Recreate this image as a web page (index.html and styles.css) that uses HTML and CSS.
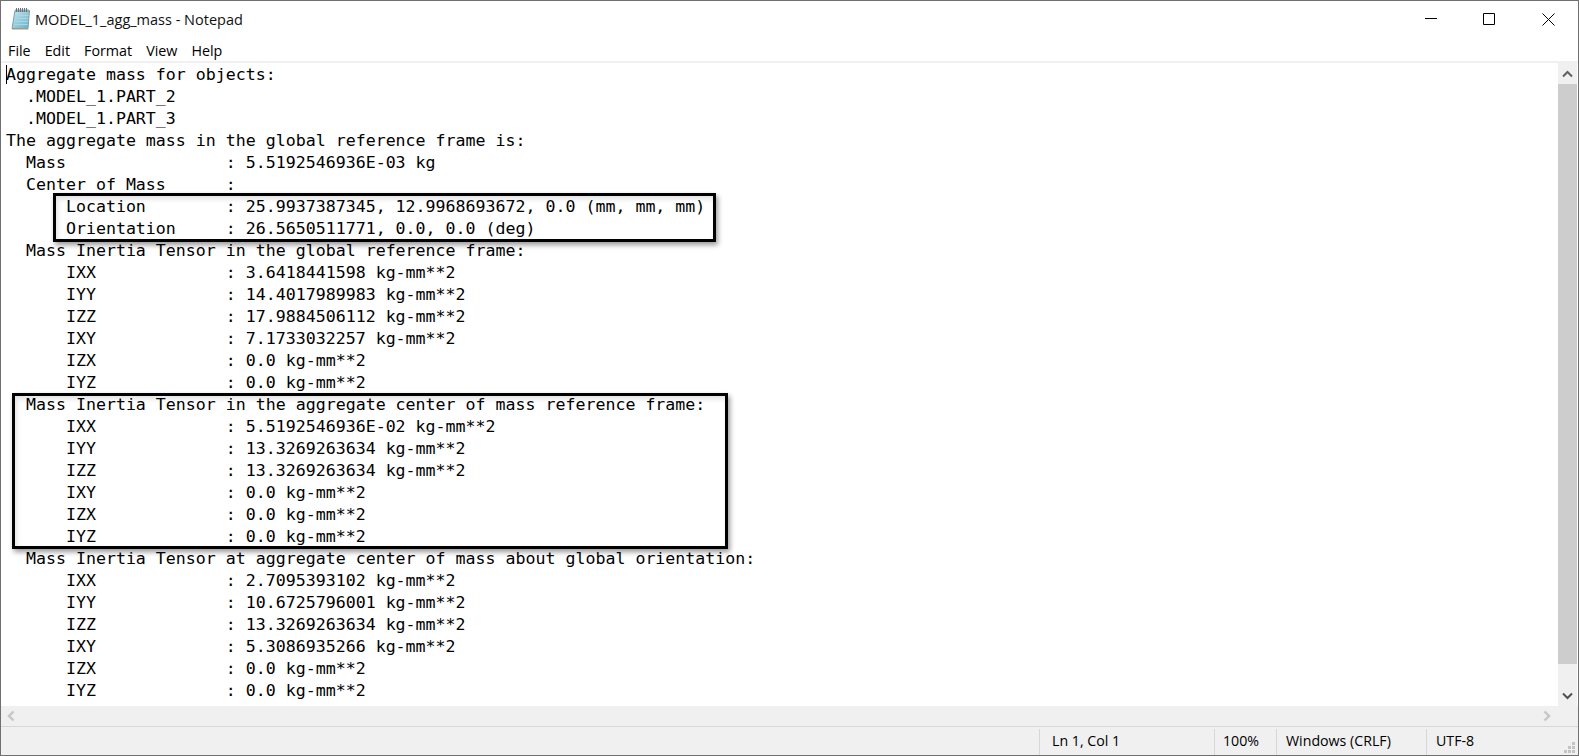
FILE: index.html
```html
<!DOCTYPE html>
<html lang="en">
<head>
<meta charset="utf-8">
<title>MODEL_1_agg_mass - Notepad</title>
<link rel="stylesheet" href="styles.css">
</head>
<body>
<div class="window">
  <header class="titlebar">
    <svg class="app-icon" width="19" height="22" viewBox="0 0 19 22">
      <defs><linearGradient id="pad" x1="0" y1="0" x2="1" y2="1"><stop offset="0" stop-color="#c4e8f2"/><stop offset="1" stop-color="#6aaec4"/></linearGradient></defs>
      <path d="M4 2.5H18.5L17 20.5H1Z" fill="url(#pad)" stroke="#7aa0ae"/>
      <path d="M4 7.5H17.5M3.6 10.5H17.2M3.3 13.5H17M3 16.5H16.8" stroke="#a8d8e6"/>
      <path d="M4 1.5h14v2.5H4z" fill="#98a8ae"/>
      <path d="M5.5 0v4M7.5 0v4M9.5 0v4M11.5 0v4M13.5 0v4M15.5 0v4" stroke="#67767c"/>
      <path d="M1 20.5H17.5V21.5H1Z" fill="#b09a74"/>
    </svg>
    <span class="title">MODEL_1_agg_mass - Notepad</span>
    <div class="controls">
      <svg class="ctl" width="13" height="13" viewBox="0 0 13 13"><path d="M1 5.5H13" stroke="#000"/></svg>
      <svg class="ctl" width="13" height="13" viewBox="0 0 13 13"><path d="M.5.5H11.5V11.5H.5Z" fill="none" stroke="#000"/></svg>
      <svg class="ctl" width="13" height="13" viewBox="0 0 13 13"><path d="M.5.5L12.5 12.5M12.5.5L.5 12.5" stroke="#000"/></svg>
    </div>
  </header>
  <nav class="menubar">
    <span>File</span><span>Edit</span><span>Format</span><span>View</span><span>Help</span>
  </nav>
  <div class="client">
    <div class="editor-row">
      <main class="editor">
        <pre class="text">Aggregate mass for objects:
  .MODEL_1.PART_2
  .MODEL_1.PART_3
The aggregate mass in the global reference frame is:
  Mass                : 5.5192546936E-03 kg
  Center of Mass      :
      Location        : 25.9937387345, 12.9968693672, 0.0 (mm, mm, mm)
      Orientation     : 26.5650511771, 0.0, 0.0 (deg)
  Mass Inertia Tensor in the global reference frame:
      IXX             : 3.6418441598 kg-mm**2
      IYY             : 14.4017989983 kg-mm**2
      IZZ             : 17.9884506112 kg-mm**2
      IXY             : 7.1733032257 kg-mm**2
      IZX             : 0.0 kg-mm**2
      IYZ             : 0.0 kg-mm**2
  Mass Inertia Tensor in the aggregate center of mass reference frame:
      IXX             : 5.5192546936E-02 kg-mm**2
      IYY             : 13.3269263634 kg-mm**2
      IZZ             : 13.3269263634 kg-mm**2
      IXY             : 0.0 kg-mm**2
      IZX             : 0.0 kg-mm**2
      IYZ             : 0.0 kg-mm**2
  Mass Inertia Tensor at aggregate center of mass about global orientation:
      IXX             : 2.7095393102 kg-mm**2
      IYY             : 10.6725796001 kg-mm**2
      IZZ             : 13.3269263634 kg-mm**2
      IXY             : 5.3086935266 kg-mm**2
      IZX             : 0.0 kg-mm**2
      IYZ             : 0.0 kg-mm**2</pre>
        <div class="caret"></div>
        <div class="callout callout-a"></div>
        <div class="callout callout-b"></div>
      </main>
      <aside class="vscroll">
        <svg class="arrow" width="19" height="21" viewBox="0 0 19 21"><path d="M5 13.5L9.5 9L14 13.5" fill="none" stroke="#606060" stroke-width="2"/></svg>
        <div class="vtrack"><div class="vthumb"></div></div>
        <svg class="arrow" width="19" height="21" viewBox="0 0 19 21"><path d="M5 8.5L9.5 13L14 8.5" fill="none" stroke="#505050" stroke-width="2"/></svg>
      </aside>
    </div>
    <div class="hscroll">
      <svg class="arrow" width="20" height="20" viewBox="0 0 20 20"><path d="M12.5 5.5L8 10L12.5 14.5" fill="none" stroke="#c6c6c6" stroke-width="2.4"/></svg>
      <svg class="arrow" width="20" height="20" viewBox="0 0 20 20"><path d="M7.5 5.5L12 10L7.5 14.5" fill="none" stroke="#c6c6c6" stroke-width="2.4"/></svg>
    </div>
    <footer class="statusbar">
      <div class="cell cell-pos">Ln 1, Col 1</div>
      <div class="cell cell-zoom">100%</div>
      <div class="cell cell-eol">Windows (CRLF)</div>
      <div class="cell cell-enc">UTF-8</div>
      <svg class="grip" width="12" height="12" viewBox="0 0 12 12"><path d="M8 0h3v3H8zM4 4h3v3H4zM8 4h3v3H8zM0 8h3v3H0zM4 8h3v3H4zM8 8h3v3H8z" fill="#c4c4c4"/></svg>
    </footer>
  </div>
</div>
</body>
</html>
```
FILE: styles.css
```css
* { box-sizing: border-box; }
html, body { margin: 0; height: 100%; background: #fff; overflow: hidden; }
.window {
  width: 1579px; height: 756px;
  display: flex; flex-direction: column;
  border: 1px solid #707070;
  background: #fff;
  font-family: "Open Sans", "Liberation Sans", sans-serif;
  color: #000;
}
.titlebar { height: 38px; flex: none; display: flex; align-items: center; padding-left: 10px; }
.app-icon { margin: 0 5px 2px 0; flex: none; }
.title { font-size: 14.5px; color: #111; white-space: nowrap; margin-bottom: 2px; }
.controls { margin-left: auto; display: flex; gap: 46px; padding-right: 23px; margin-top: -1px; }
.menubar { height: 22px; flex: none; display: flex; gap: 14px; padding: 1px 0 0 7px; font-size: 14.3px; line-height: 22px; }
.client { flex: 1; min-height: 0; display: flex; flex-direction: column; border-top: 2px solid #f0f0f0; }
.editor-row { flex: 1; min-height: 0; display: flex; }
.editor { position: relative; flex: 1; min-width: 0; background: #fff; overflow: hidden; }
.text {
  margin: 0; padding: 1px 0 0 5px;
  font-family: "DejaVu Sans Mono", "Liberation Mono", monospace;
  font-size: 16.6px; line-height: 22px; color: #000;
}
.caret { position: absolute; left: 5px; top: 2px; width: 1px; height: 19px; background: #000; }
.callout { position: absolute; border: 3px solid #000; box-shadow: 2px 3px 5px rgba(0,0,0,.4), inset 2px 3px 5px rgba(0,0,0,.12); }
.callout-a { left: 52px; top: 130px; width: 663px; height: 49px; }
.callout-b { left: 11px; top: 330px; width: 716px; height: 156px; }
.vscroll { width: 19px; flex: none; background: #f0f0f0; display: flex; flex-direction: column; margin-right: 1px; }
.arrow { flex: none; display: block; }
.vtrack { flex: 1; min-height: 0; }
.vthumb { height: 580px; background: #cdcdcd; }
.hscroll { height: 20px; flex: none; background: #f0f0f0; display: flex; justify-content: space-between; padding-right: 21px; }
.statusbar {
  height: 29px; flex: none; display: flex; background: #f0f0f0;
  border-top: 1px solid #d7d7d7; padding-top: 2px; padding-left: 1038px;
  font-size: 14.2px; line-height: 24px; position: relative;
}
.cell { border-left: 1px solid #d7d7d7; white-space: nowrap; height: 26px; flex: none; }
.cell-pos { width: 175px; padding-left: 12px; }
.cell-zoom { width: 62px; padding-left: 8px; }
.cell-eol { width: 150px; padding-left: 9px; }
.cell-enc { width: 120px; padding-left: 9px; }
.grip { position: absolute; right: 2px; bottom: 1px; }
```
